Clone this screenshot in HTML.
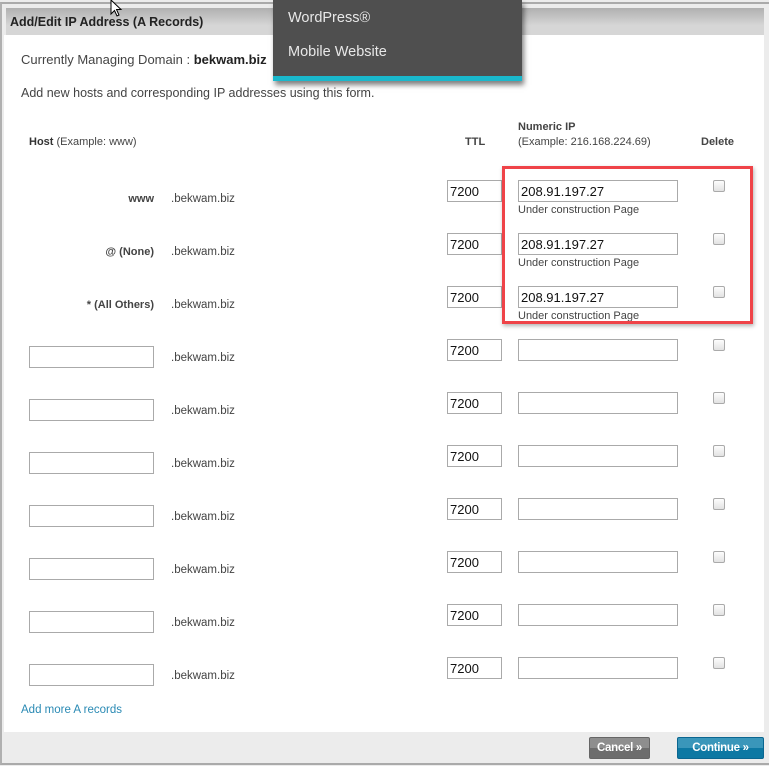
<!DOCTYPE html>
<html><head><style>
*{box-sizing:border-box;margin:0;padding:0}
body{width:769px;height:766px;background:#ececec;font-family:"Liberation Sans",sans-serif;color:#333;position:relative;overflow:hidden}
.a{position:absolute}
.frame{left:0;top:2px;width:769px;height:763px;border-top:2px solid #aaa;border-left:2px solid #b0b0b0;border-bottom:2px solid #aaa}
.hdr{left:6px;top:8px;width:758px;height:27px;background:linear-gradient(#b0b0b0,#d6d6d6 65%);font-weight:bold;font-size:12.5px;color:#222;padding:7px 0 0 4px}
.panel{left:4px;top:35px;width:760px;height:697px;background:#fff}
.t{font-size:11.5px;color:#444;white-space:nowrap}
.in{border:1px solid #aaa;background:#fff;height:22px;font-size:13px;color:#111;padding:3px 0 0 2px;white-space:nowrap}
.cb{width:12px;height:12px;border:1px solid #aaa;border-radius:2px;background:linear-gradient(#fdfdfd,#e2e2e2)}
.btn{height:22px;border-radius:2px;color:#fff;font-weight:bold;font-size:11.5px;text-align:center;padding-top:4px;letter-spacing:-.3px}
</style></head><body>
<div class="a frame"></div>
<div class="a hdr">Add/Edit IP Address (A Records)</div>
<div class="a panel"></div>
<div class="a t" style="left:21px;top:52px;font-size:13px">Currently Managing Domain : <b style="color:#222">bekwam.biz</b></div>
<div class="a t" style="left:21px;top:86px;font-size:12.5px">Add new hosts and corresponding IP addresses using this form.</div>
<div class="a t" style="left:29px;top:136px;font-size:11px"><b style="color:#333">Host</b> (Example: www)</div>
<div class="a t" style="left:465px;top:136px;font-size:11px;font-weight:bold">TTL</div>
<div class="a t" style="left:518px;top:121px;font-size:11px;font-weight:bold">Numeric IP</div>
<div class="a t" style="left:518px;top:136px;font-size:11px">(Example: 216.168.224.69)</div>
<div class="a t" style="left:701px;top:136px;font-size:11px;font-weight:bold">Delete</div>
<div id="rows"></div>
<div class="a t" style="left:21px;top:704px;color:#2a8ab4;font-size:11.5px">Add more A records</div>
<div class="a btn" style="left:589px;top:737px;width:61px;background:linear-gradient(#8e8e8e 50%,#6d6d6d 50%);border:1px solid #666">Cancel »</div>
<div class="a btn" style="left:677px;top:737px;width:87px;background:linear-gradient(#3a96ba 50%,#0d78a3 50%);border:1px solid #0a6690">Continue »</div>
<div class="a" style="left:502px;top:166px;width:251px;height:158px;border:3px solid #ef4348;box-shadow:1px 2px 4px rgba(0,0,0,.3)"></div>
<div class="a" style="left:273px;top:0;width:249px;height:81px;background:#4f4f4f;border-bottom:5px solid #1ab8cc;box-shadow:2px 4px 5px rgba(0,0,0,.5)"></div>
<div class="a t" style="left:288px;top:10px;color:#e8e8e8;font-size:14.5px">WordPress®</div>
<div class="a t" style="left:288px;top:44px;color:#e8e8e8;font-size:14.5px">Mobile Website</div>
<svg class="a" style="left:110px;top:0" width="14" height="18" viewBox="0 0 14 18"><path d="M1 0V14L4.5 10.5L7 16L9 15L6.5 9.5H11Z" fill="#fff" stroke="#000" stroke-width="1"/></svg>
<script>
var h='',names=['www','@ (None)','* (All Others)'];
for(var i=0;i<10;i++){var y=180+i*53;
if(i<3)h+='<div class="a t" style="top:'+(y+13)+'px;right:615px;font-weight:bold;font-size:11px">'+names[i]+'</div>';
else h+='<div class="a in" style="left:29px;top:'+(y+7)+'px;width:125px"></div>';
h+='<div class="a t" style="left:171px;top:'+(y+13)+'px;font-size:11.5px">.bekwam.biz</div>';
h+='<div class="a in" style="left:447px;top:'+y+'px;width:55px">7200</div>';
h+='<div class="a in" style="left:518px;top:'+y+'px;width:160px">'+(i<3?'208.91.197.27':'')+'</div>';
if(i<3)h+='<div class="a t" style="left:518px;top:'+(y+24)+'px;font-size:11px">Under construction Page</div>';
h+='<div class="a cb" style="left:713px;top:'+y+'px"></div>';}
document.getElementById('rows').innerHTML=h;
</script>
</body></html>
